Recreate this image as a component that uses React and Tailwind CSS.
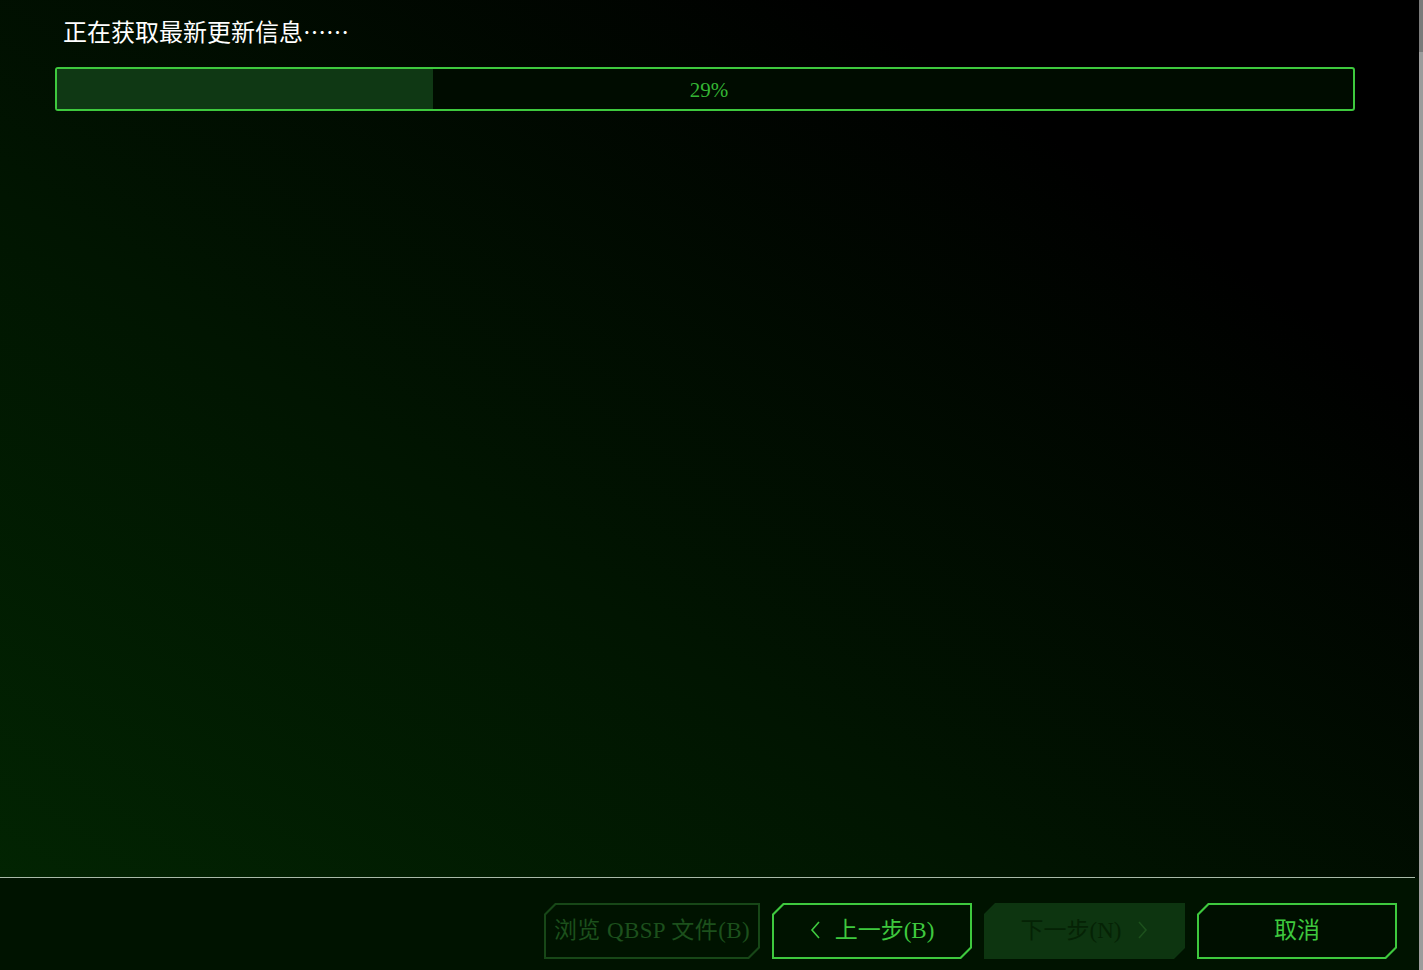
import React from "react";

const FONT = { fontFamily: '"Liberation Serif", "Noto Sans CJK SC", serif' };

// 细线箭头，和截图里的尖括号一样
const Chevron = ({ dir = "left", className = "" }) => (
  <svg width="11" height="20" viewBox="0 0 11 20" className={className} fill="none" stroke="currentColor" strokeWidth="1.6">
    {dir === "left" ? <polyline points="9,2 2,10 9,18" /> : <polyline points="2,2 9,10 2,18" />}
  </svg>
);

// 切角按钮：外层是边框颜色，内层是底色
const ChamferButton = ({ children, border, fill, text, width }) => (
  <div
    className={`h-[56px] ${width} p-[2px] ${border} [clip-path:polygon(11px_0,100%_0,100%_calc(100%-11px),calc(100%-11px)_100%,0_100%,0_11px)]`}
  >
    <div
      className={`h-full w-full flex items-center justify-center ${fill} ${text} text-[23px] [clip-path:polygon(10px_0,100%_0,100%_calc(100%-10px),calc(100%-10px)_100%,0_100%,0_10px)]`}
    >
      {children}
    </div>
  </div>
);

export default function App() {
  return (
    <div
      className="w-[1423px] h-[970px] flex bg-[linear-gradient(to_top_right,#022602_0%,#011501_40%,#000000_80%)] overflow-hidden"
      style={FONT}
    >
      <div className="flex-1 flex flex-col">
        {/* 顶部：状态与进度条 */}
        <div className="flex-1 flex flex-col pl-[55px] pr-[64px]">
          <div className="mt-[18px] h-[30px] pl-[8px] text-[24px] leading-[30px] text-white whitespace-nowrap">
            正在获取最新更新信息
            <span className="text-[23px] leading-none" style={{ fontFamily: '"Noto Sans CJK SC", sans-serif' }}>……</span>
          </div>
          <div className="mt-[19px] h-[44px] relative rounded-[3px] border-2 border-[#3ec93e] bg-[#000c00] overflow-hidden">
            <div className="h-full w-[29%] bg-[#0f3814]" />
            <div className="absolute inset-0 flex items-center justify-center pl-[8px] pt-[4px] text-[21px] text-[#34b534]">
              29%
            </div>
          </div>
        </div>

        {/* 底部按钮栏 */}
        <div className="h-[1px] bg-[#a9baa9] mr-[4px]" />
        <div className="h-[92px] bg-[#001300] flex justify-end items-start gap-[12px] pt-[25px] pr-[22px]">
          <ChamferButton width="w-[216px]" border="bg-[#174717]" fill="bg-[#001300]" text="text-[#1c501c]">
            <span className="whitespace-pre tracking-[0.4px]">浏览 QBSP 文件(B)</span>
          </ChamferButton>
          <ChamferButton width="w-[200px]" border="bg-[#3ec93e]" fill="bg-[#001300]" text="text-[#3ec93e]">
            <Chevron dir="left" className="mr-[14px] mb-[2px]" />
            <span>上一步(B)</span>
          </ChamferButton>
          <ChamferButton width="w-[201px]" border="bg-[#0d3510]" fill="bg-[#0d3510]" text="text-[#052205]">
            <span>下一步(N)</span>
            <Chevron dir="right" className="ml-[16px] mb-[2px] text-[#1c501c]" />
          </ChamferButton>
          <ChamferButton width="w-[200px]" border="bg-[#3ec93e]" fill="bg-[#000f00]" text="text-[#3ec93e]">
            取消
          </ChamferButton>
        </div>
      </div>
      {/* 右侧滚动条边缘 */}
      <div className="w-[4px] flex flex-col bg-[#8a8a8a]">
        <div className="h-[52px] bg-[#7a7a7a]" />
        <div className="flex-1 bg-[#9c9c9c]" />
      </div>
    </div>
  );
}
